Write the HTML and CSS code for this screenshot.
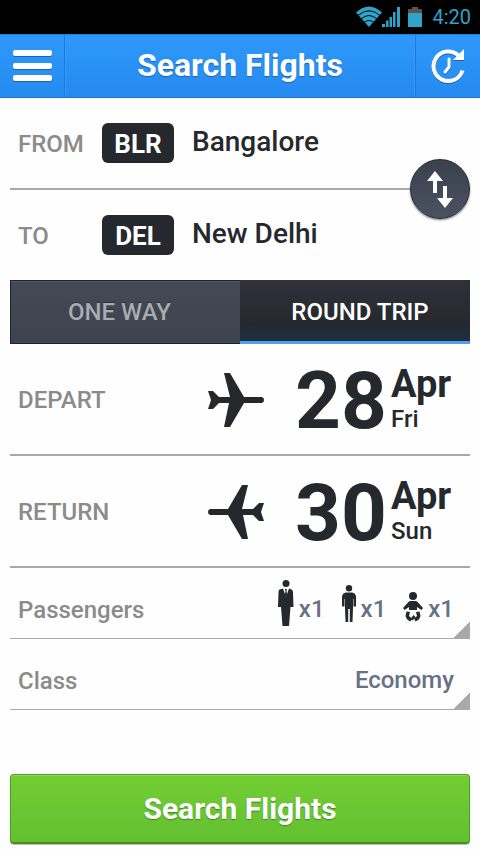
FILE: index.html
```html
<!DOCTYPE html>
<html lang="en">
<head>
<meta charset="utf-8">
<meta name="viewport" content="width=device-width, initial-scale=1">
<title>Search Flights</title>
<link rel="stylesheet" href="styles.css">
</head>
<body>
<div class="status">
  <svg width="68" height="22" viewBox="0 0 68 22" aria-hidden="true">
    <path d="M0 6.500Q13-5.500 26 6.500L13 21z" fill="#2fa3c9"/>
    <path d="M2 9.500Q13 0 24 9.500M5 13Q13 6 21 13M8 16.500Q13 12.500 18 16.500" fill="none" stroke="#000" stroke-width="1"/>
    <path d="M26 18h3v3h-3zM30 14.500h2.500V21H30zM33.500 11h2.500v10h-2.500zM37 6h2.500v15H37zM41 1h3v20h-3z" fill="#2fa3c9"/>
    <path d="M56 1h6v2h4v4H52V3h4z" fill="#5a5350"/>
    <path d="M52 7h14v14H52z" fill="#2fa3c9"/>
  </svg>
  <span class="clock">4:20</span>
</div>
<header class="bar">
  <button class="bar-btn menu" type="button" aria-label="Menu">
    <svg width="40" height="34" viewBox="0 0 40 34">
      <g fill="#1d62ad"><rect x="1" y="2" width="39" height="6" rx="2"/><rect x="1" y="15" width="39" height="6" rx="2"/><rect x="1" y="27" width="39" height="6" rx="2"/></g>
      <g fill="#fff"><rect x="1" y="1" width="39" height="6" rx="2"/><rect x="1" y="14" width="39" height="6" rx="2"/><rect x="1" y="26" width="39" height="6" rx="2"/></g>
    </svg>
  </button>
  <h1 class="title">Search Flights</h1>
  <button class="bar-btn recent" type="button" aria-label="Recent searches">
    <svg class="lifted" width="34" height="36" viewBox="0 0 34 36">
      <path d="M27.500 7.500A14.800 14.800 0 1 0 31.500 22.500" fill="none" stroke="#fff" stroke-width="4"/>
      <path d="M33 1v11H22z" fill="#fff"/>
      <path d="M18 11v8l-4 5" fill="none" stroke="#fff" stroke-width="3" stroke-linecap="round" stroke-linejoin="round"/>
    </svg>
  </button>
</header>
<main class="form">
  <section class="route">
    <button class="place" type="button"><span class="label">FROM</span><span class="code">BLR</span><span class="city">Bangalore</span></button>
    <button class="place" type="button"><span class="label">TO</span><span class="code">DEL</span><span class="city">New Delhi</span></button>
    <button class="swap" type="button" aria-label="Swap cities">
      <svg width="26" height="38" viewBox="0 0 26 38"><path d="M8 1l8 10h-6v12H6V11H0zM16 16h4v12h6l-8 10-8-10h6z" fill="#fff"/></svg>
    </button>
  </section>
  <div class="tabs" role="tablist">
    <button class="tab" type="button" role="tab" aria-selected="false">ONE WAY</button>
    <button class="tab active" type="button" role="tab" aria-selected="true">ROUND TRIP</button>
  </div>
  <button class="date" type="button">
    <span class="label">DEPART</span>
    <svg class="plane" width="56" height="56" viewBox="0 0 56 56"><path d="M16 1h6L36 25h18q2 .5 2 3t-2 3H36L22 55h-6l5-24h-10L5 37H0l3-9L0 19h5l6 6h11z" fill="#25282d"/></svg>
    <span class="day">28</span>
    <span class="when"><span class="month">Apr</span><span class="weekday">Fri</span></span>
  </button>
  <button class="date" type="button">
    <span class="label">RETURN</span>
    <svg class="plane" width="56" height="56" viewBox="0 0 56 56"><path d="M40 1h-6L20 25H2q-2 .5-2 3t2 3h18l14 24h6l-5-24h10l6 6h5l-3-9 3-9h-5l-6 6H34z" fill="#25282d"/></svg>
    <span class="day">30</span>
    <span class="when"><span class="month">Apr</span><span class="weekday">Sun</span></span>
  </button>
  <button class="option" type="button">
    <span class="label">Passengers</span>
    <span class="people">
      <span class="person">
        <svg width="16" height="46" viewBox="0 0 16 46"><circle cx="8" cy="3.500" r="3.500" fill="#25282d"/><path d="M5 8.500L1.500 9.500Q.5 10 .5 12L0 27h3l1.500 19h6.500l1.500-19h3L15 12q0-2-1.500-2.500L11 8.500 8 17z" fill="#25282d"/><path d="M7 9h2l-.5 2 .7 4L8 17.500 6.800 15l.7-4z" fill="#25282d"/></svg>
        <span>x1</span>
      </span>
      <span class="person">
        <svg width="14" height="37" viewBox="0 0 14 37"><circle cx="7" cy="3.200" r="3.200" fill="#25282d"/><path d="M4 7.500h6q3.500.5 4 4v10h-2.500V14H11v9l-.500 14H7.800V24H6.200v13H3.500L3 23v-9h-.5v7.500H0v-10Q.5 8 4 7.500z" fill="#25282d"/></svg>
        <span>x1</span>
      </span>
      <span class="person baby">
        <svg width="20" height="30" viewBox="0 0 20 30"><circle cx="10" cy="4" r="4" fill="#25282d"/><path d="M7 9h6q1.500.5 2.500 2l4.500 5-1.500 2-4.500-3V18H6v-3l-4.500 3L0 16l4.500-5Q5.500 9.500 7 9z" fill="#25282d"/><path d="M3.500 19.500l3.500.5-1 4 3 2.500-1.500 3Q3.500 28 2.500 24zM16.500 19.500L13 20l1 4-3 2.500 1.500 3q4-1.500 5-5.500z" fill="#25282d"/><path d="M10.500 23l2 2-3 3.500-2-1.500z" fill="#25282d"/></svg>
        <span>x1</span>
      </span>
    </span>
  </button>
  <div class="option">
    <label class="label" for="cabin">Class</label>
    <select class="cabin" id="cabin"><option>Economy</option><option>Business</option><option>First</option></select>
  </div>
  <button class="submit" type="submit">Search Flights</button>
</main>
</body>
</html>
```
FILE: styles.css
```css
* { box-sizing: border-box; }
body {
  margin: 0;
  background: #fefefe;
  color: #25282d;
  font-family: Roboto, "Liberation Sans", sans-serif;
  font-size: 24px;
  font-weight: 500;
}
button, select {
  margin: 0;
  padding: 0;
  border: 0;
  background: none;
  color: inherit;
  font: inherit;
  text-align: left;
  cursor: pointer;
}
svg { display: block; flex: none; }

.status {
  display: flex;
  align-items: center;
  justify-content: flex-end;
  gap: 8px;
  height: 34px;
  padding-right: 9px;
  background: #000;
  color: #2fa3c9;
}
.clock { font-size: 20px; font-weight: 400; }

.bar {
  display: flex;
  height: 64px;
  background: linear-gradient(#2e99fa, #258af0);
  border-top: 1px solid #1c7fe0;
  border-bottom: 1px solid #1a72cc;
  color: #fff;
}
.bar-btn {
  display: flex;
  align-items: center;
  justify-content: center;
  width: 65px;
}
.menu { border-right: 1px solid #1f78d4; }
.recent { border-left: 1px solid #1f78d4; }
.title {
  flex: 1;
  margin: 0;
  border: solid #3a9bf6;
  border-width: 0 1px;
  font-size: 32px;
  font-weight: 700;
  line-height: 60px;
  text-align: center;
  text-shadow: 0 1px 1px #1d62ad;
}
.lifted { filter: drop-shadow(0 1px 0 #1d62ad); }

.form { padding: 0 10px 10px; }
.label { color: #8b8b8b; }

.route { position: relative; }
.place {
  display: flex;
  align-items: center;
  width: 100%;
  height: 90px;
  padding-left: 8px;
}
.place:first-child { height: 92px; border-bottom: 2px solid #a9a9a9; }
.place .label { width: 84px; padding-top: 2px; }
.code {
  width: 72px;
  height: 40px;
  margin-right: 18px;
  border-radius: 6px;
  background: #25282d;
  color: #fff;
  font-size: 26px;
  font-weight: 700;
  line-height: 42px;
  text-align: center;
}
.city { padding-bottom: 4px; font-size: 28px; }
.swap {
  position: absolute;
  top: 61px;
  right: 0;
  display: flex;
  align-items: center;
  justify-content: center;
  width: 60px;
  height: 60px;
  border: 1px solid #262b35;
  border-radius: 50%;
  background: linear-gradient(#3a414d, #4a5260);
  box-shadow: 0 1px 2px #777;
}

.tabs { display: grid; grid-template-columns: 1fr 1fr; height: 64px; }
.tab {
  border: 1px solid #1f242c;
  border-right: 0;
  background: linear-gradient(#434955, #3d444f);
  box-shadow: inset 0 1px #505662;
  color: #a9acb2;
  text-align: center;
  text-shadow: 0 -1px #2b3038;
}
.tab:first-child { padding-right: 12px; }
.tab.active {
  padding: 3px 0 0 10px;
  border: 0;
  border-bottom: 3px solid #539fe9;
  background: linear-gradient(#2f323b, #25282d 70%, #1f2f40);
  box-shadow: none;
  color: #fff;
}

.date {
  display: flex;
  align-items: center;
  width: 100%;
  height: 112px;
  padding: 2px 0 0 8px;
  border-bottom: 2px solid #a9a9a9;
}
.date .label { flex: 1; }
.plane { margin-right: 31px; }
.day { width: 96px; padding-top: 2px; font-size: 80px; font-weight: 700; line-height: 1; }
.when { display: flex; flex-direction: column; width: 79px; padding-top: 2px; }
.month { font-size: 38px; font-weight: 700; line-height: 36px; }
.weekday { line-height: 34px; }

.option {
  display: flex;
  align-items: center;
  justify-content: space-between;
  width: 100%;
  height: 71px;
  padding: 0 16px 0 8px;
  border-bottom: 1px solid #a9a9a9;
  background: linear-gradient(135deg, transparent 50%, #a9a9a9 50%) right bottom / 16px 16px no-repeat;
}
.option .label { padding-top: 14px; }
.people { display: flex; align-items: center; gap: 17px; color: #667185; }
.person { display: flex; align-items: center; gap: 5px; }
.person > span { padding-top: 12px; }
.baby > svg { margin-top: 8px; }
.cabin {
  flex: 1;
  height: 100%;
  padding-top: 12px;
  appearance: none;
  color: #667185;
  text-align-last: right;
}

.submit {
  width: 100%;
  height: 70px;
  margin-top: 64px;
  border: 1px solid #4f9c28;
  border-bottom: 2px solid #458c25;
  border-radius: 4px;
  background: linear-gradient(#73cd34, #63c030);
  box-shadow: inset 0 1px #8bdc55, 0 1px 1px #bbb;
  color: #fff;
  font-size: 30px;
  font-weight: 700;
  text-align: center;
  text-shadow: 0 1px 1px #3f8520;
}
```
